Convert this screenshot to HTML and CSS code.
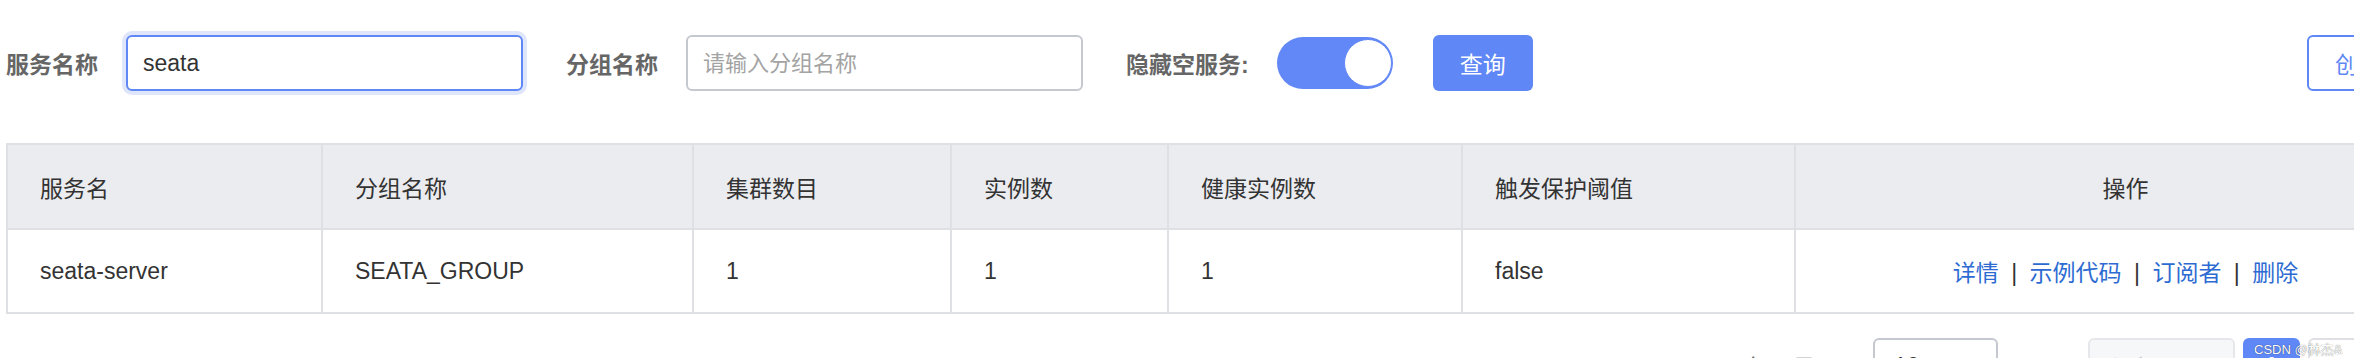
FILE: index.html
```html
<!DOCTYPE html>
<html lang="zh-CN">
<head>
    <meta charset="UTF-8">
    <meta name="viewport" content="width=device-width, initial-scale=1.0">
    <title>服务列表</title>
    <link rel="stylesheet" href="styles.css">
</head>
<body>

    <div class="page">
        <div class="search-bar">
            <div class="field">
                <label class="field-label" for="serviceName">服务名称</label>
                <input class="text-input is-focused" id="serviceName" type="text" value="seata">
            </div>
            <div class="field">
                <label class="field-label" for="groupName">分组名称</label>
                <input class="text-input" id="groupName" type="text" placeholder="请输入分组名称">
            </div>
            <div class="field">
                <span class="field-label">隐藏空服务:</span>
                <span class="switch is-on"><span class="switch-knob"></span></span>
            </div>
            <button class="btn btn-primary">查询</button>
            <button class="btn btn-outline create-button">创建服务</button>
        </div>

        <table class="service-table">
            <colgroup>
                <col style="width: 315px">
                <col style="width: 371px">
                <col style="width: 258px">
                <col style="width: 217px">
                <col style="width: 294px">
                <col style="width: 333px">
                <col style="width: 661px">
            </colgroup>
            <thead>
                <tr>
                    <th>服务名</th>
                    <th>分组名称</th>
                    <th>集群数目</th>
                    <th>实例数</th>
                    <th>健康实例数</th>
                    <th>触发保护阈值</th>
                    <th class="col-actions">操作</th>
                </tr>
            </thead>
            <tbody>
                <tr>
                    <td>seata-server</td>
                    <td>SEATA_GROUP</td>
                    <td>1</td>
                    <td>1</td>
                    <td>1</td>
                    <td>false</td>
                    <td class="col-actions">
                        <a href="#">详情</a> <span class="sep">|</span>
                        <a href="#">示例代码</a> <span class="sep">|</span>
                        <a href="#">订阅者</a> <span class="sep">|</span>
                        <a href="#">删除</a>
                    </td>
                </tr>
            </tbody>
        </table>

        <div class="pager">
            <span class="pager-label">每页显示:</span>
            <div class="page-size">
                <span>10</span>
                <svg class="chevron" width="22" height="14" viewBox="0 0 22 14">
                    <path d="M2 2 L11 11 L20 2" fill="none" stroke="#666" stroke-width="2"/>
                </svg>
            </div>
            <button class="pager-btn" disabled>
                <svg width="12" height="20" viewBox="0 0 12 20">
                    <path d="M10 2 L2 10 L10 18" fill="none" stroke="#c5c7cc" stroke-width="2"/>
                </svg>
                上一页
            </button>
            <button class="pager-btn is-current">1</button>
            <button class="pager-btn">下一页</button>
        </div>
    </div>

    <div class="watermark">CSDN @林杰&amp;</div>

</body>
</html>
```

FILE: styles.css
```css
html, body {
    overflow: hidden;
}

body {
    margin: 0;
    font-family: 'Liberation Sans', 'Noto Sans CJK SC', sans-serif;
    font-size: 23px;
    color: #333;
    background-color: #fff;
}

.page {
    width: 2449px;
    padding-left: 6px;
}

.search-bar {
    display: flex;
    align-items: center;
    padding-top: 35px;
}

.field {
    display: flex;
    align-items: center;
    gap: 28px;
    margin-right: 43px;
}

.field-label {
    font-weight: bold;
    color: #666;
    white-space: nowrap;
}

.text-input {
    box-sizing: border-box;
    width: 397px;
    height: 56px;
    padding: 0 15px;
    font-family: inherit;
    font-size: 23px;
    color: #333;
    border: 2px solid #c6c8cf;
    border-radius: 6px;
    outline: none;
}

.text-input::placeholder {
    font-size: 22px;
    color: #a3a3a3;
}

.text-input.is-focused {
    border-color: #5f87f6;
    box-shadow: 0 0 0 4px #dfe6fc;
}

.switch {
    position: relative;
    box-sizing: border-box;
    width: 116px;
    height: 52px;
    border-radius: 26px;
    background-color: #e0e2e6;
}

.switch.is-on {
    background-color: #6287f6;
}

.switch-knob {
    position: absolute;
    top: 2px;
    left: 2px;
    box-sizing: border-box;
    width: 48px;
    height: 48px;
    border-radius: 50%;
    background-color: #fff;
    border: 1px solid #6287f6;
}

.switch.is-on .switch-knob {
    left: auto;
    right: 1px;
}

.btn {
    box-sizing: border-box;
    height: 56px;
    padding: 0 26px;
    font-family: inherit;
    font-size: 23px;
    border-radius: 6px;
    cursor: pointer;
    white-space: nowrap;
}

.btn-primary {
    width: 100px;
    padding: 0;
    margin-left: -3px;
    border: none;
    color: #fff;
    background-color: #5f87f6;
}

.btn-outline {
    border: 2px solid #5f87f6;
    color: #5f87f6;
    background-color: #fff;
}

.create-button {
    margin-left: auto;
}

.service-table {
    width: 2449px;
    margin-top: 52px;
    table-layout: fixed;
    border-collapse: collapse;
    border: 2px solid #dfe0e4;
}

.service-table th,
.service-table td {
    padding: 0 32px;
    text-align: left;
    border: 2px solid #dfe0e4;
    white-space: nowrap;
}

.service-table th {
    height: 83px;
    font-weight: normal;
    color: #333;
    background-color: #ebecf0;
}

.service-table td {
    height: 82px;
}

.service-table .col-actions {
    text-align: center;
}

.col-actions a {
    color: #2d6bd2;
    text-decoration: none;
}

.col-actions .sep {
    color: #333;
    margin: 0 6px;
}

.pager {
    display: flex;
    align-items: center;
    justify-content: flex-end;
    margin-top: 24px;
}

.pager-label {
    color: #666;
    margin-right: 28px;
}

.page-size {
    box-sizing: border-box;
    display: flex;
    align-items: center;
    justify-content: space-between;
    width: 125px;
    height: 56px;
    padding: 0 16px 0 19px;
    margin-right: 82px;
    border: 2px solid #c6c8cf;
    border-radius: 6px;
    color: #333;
}

.pager-btn {
    box-sizing: border-box;
    display: flex;
    align-items: center;
    justify-content: center;
    gap: 12px;
    width: 147px;
    height: 56px;
    margin-left: 8px;
    font-family: inherit;
    font-size: 23px;
    letter-spacing: 6px;
    color: #333;
    background-color: #fff;
    border: 2px solid #dfe0e4;
    border-radius: 6px;
}

.pager-btn:disabled {
    color: #c5c7cc;
    background-color: #f6f7f9;
    border-color: #e6e7eb;
}

.pager-btn.is-current {
    width: 57px;
    letter-spacing: 0;
    font-weight: bold;
    color: #fff;
    background-color: #5f87f6;
    border-color: #5f87f6;
}

.watermark {
    position: absolute;
    left: 2254px;
    top: 339px;
    font-size: 13px;
    color: #fff;
    text-shadow: 0 0 1px rgba(0, 0, 0, 0.7);
    white-space: nowrap;
}
```
